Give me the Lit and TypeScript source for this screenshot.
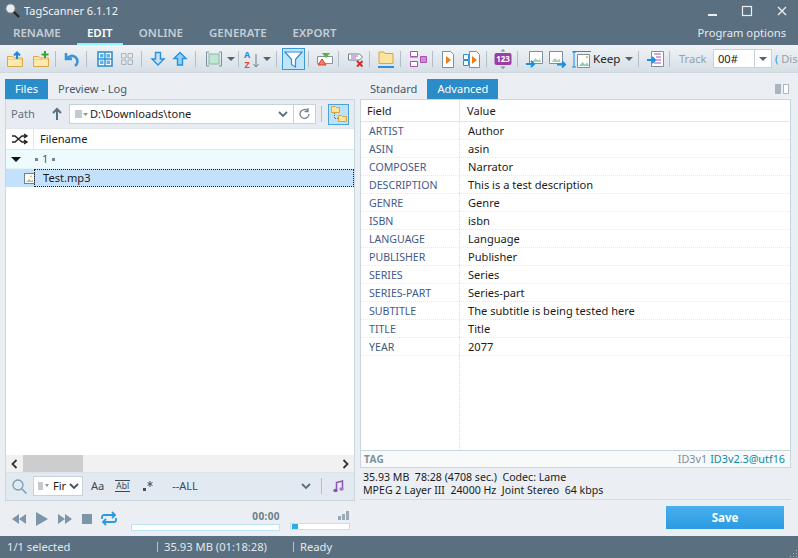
import { LitElement, css, html, svg } from "lit";
import { customElement } from "lit/decorators.js";

const ic = (w: number, h: number, body: unknown, cls = "") =>
  html`<svg class="ic ${cls}" width=${w} height=${h} viewBox="0 0 ${w} ${h}">${body}</svg>`;

const folder = (extra: unknown) => svg`
  <path d="M2.500 7.500h5l1.500 1.500h8.500v8.500h-15z" fill="#fde9ad" stroke="#dca94a"/>
  <path d="M3 10.500h14" stroke="#f4cf78"/>${extra}`;

const sep = html`<span class="sep"></span>`;
const caret = (cls = "") => html`<span class="caret ${cls}"></span>`;
const picture = svg`<path d="M6 15l3.500-4 2.500 2.500 2-2 2.500 3.500z" fill="#8fd0b0"/><circle cx="14" cy="6" r="1.200" fill="#f0c060"/>`;

const tags: [string, string][] = [
  ["ARTIST", "Author"],
  ["ASIN", "asin"],
  ["COMPOSER", "Narrator"],
  ["DESCRIPTION", "This is a test description"],
  ["GENRE", "Genre"],
  ["ISBN", "isbn"],
  ["LANGUAGE", "Language"],
  ["PUBLISHER", "Publisher"],
  ["SERIES", "Series"],
  ["SERIES-PART", "Series-part"],
  ["SUBTITLE", "The subtitle is being tested here"],
  ["TITLE", "Title"],
  ["YEAR", "2077"],
];

@customElement("app-root")
export class AppRoot extends LitElement {
  static styles = css`
    :host {
      display: flex;
      flex-direction: column;
      width: 798px;
      height: 558px;
      overflow: hidden;
      background: #ebeff4;
      color: #1b1b1b;
      font-family: "Noto Sans", "Open Sans", sans-serif;
      font-size: 11.1px;
      line-height: 16px;
    }
    .ic { display: block; flex: none; overflow: visible; }

    .head { background: #5a6f80; color: #fff; height: 45px; flex: none; }
    .title { display: flex; align-items: center; height: 22px; padding-left: 4px; gap: 4px; font-size: 11px; color: #f2f5f7; }
    .winbtns { margin-left: auto; display: flex; gap: 25px; padding-right: 11px; align-items: center; }
    .menu { display: flex; height: 23px; padding-left: 13px; font-weight: 600; font-size: 11.5px; color: #c3ced6; }
    .menu span { margin-right: 26px; line-height: 21px; }
    .menu .on { color: #fff; margin: 0 16px 0 -10px; width: 46px; text-align: center; border-bottom: 2px solid #8ff0ff; height: 21px; }
    .menu .opts { margin: 0 12px 0 auto; font-weight: 400; font-size: 11.200px; color: #e4eaee; }

    .toolbar { display: flex; align-items: center; height: 28px; flex: none; padding-left: 5px;
      background: linear-gradient(#f0f3f6, #d6dfe6); overflow: hidden; border-bottom: 1px solid #cfd8de; box-sizing: border-box; }
    .toolbar > .ic { margin-left: 6px; }
    .toolbar > .ic:first-child { margin-left: 0; }
    .toolbar > .ic.g2 { margin-left: 2px; }
    .toolbar > .ic.g3 { margin-left: 3px; }
    .toolbar > .ic.g4 { margin-left: 4px; }
    .toolbar > .ic.g5 { margin-left: 5px; }
    .toolbar > .ic.g7 { margin-left: 7px; }
    .toolbar > .ic.g8 { margin-left: 8px; }
    .sep { width: 1px; height: 16px; background: #b4c0c9; flex: none; margin-left: 4px; }
    .sep.g3 { margin-left: 3px; }
    .sep.g5 { margin-left: 5px; }
    .caret { width: 0; height: 0; border: 4px solid transparent; border-top: 4px solid #55646f; border-bottom: 0; flex: none; margin-left: 2px; }
    .caret.g3 { margin-left: 3px; }
    .caret.g5 { margin-left: 5px; }
    .filter { background: #c2e4f8; border: 1px solid #3b9ad6; width: 23px; height: 22px; display: flex; align-items: center; justify-content: center; flex: none; box-sizing: border-box; margin-left: 5px; }
    .keep { color: #222; margin-left: 2px; width: 27px; flex: none; font-size: 11.600px; }
    .track { color: #93a2ad; margin-left: 9px; width: 27px; flex: none; }
    .trackbox { display: flex; align-items: center; width: 59px; height: 19px; background: #fff; border: 1px solid #c6d2da; flex: none; padding-left: 4px; box-sizing: border-box; margin-left: 7px; }
    .trackbox i { margin-left: auto; width: 16px; height: 100%; border-left: 1px solid #c6d2da; display: flex; align-items: center; justify-content: center; }
    .trackbox .caret { margin: 0; }
    .disc { color: #93a2ad; white-space: nowrap; margin-left: 3px; }
    .disc b { color: #2a9ae0; font-weight: 400; }

    .body { display: grid; grid-template-columns: 350px 431px; gap: 0 5px; padding: 6px 7px 0 5px; height: 428px; box-sizing: border-box; flex: none; }
    .col { display: flex; flex-direction: column; min-width: 0; }
    .tabs { display: flex; height: 20px; flex: none; align-items: center; }
    .tabs span { padding: 0 10px; line-height: 20px; color: #46586a; }
    .tabs .on { background: #2a8cc8; color: #fff; }
    .tabs .layout { margin-left: auto; margin-right: 2px; padding: 0; }

    .panel { border: 1px solid #c8d6de; height: 402px; box-sizing: border-box; display: flex; flex-direction: column; background: #fff; flex: none; }
    .path { display: flex; align-items: center; height: 28px; background: #e6ecf2; flex: none; padding-left: 5px; box-sizing: border-box; }
    .path .lbl { color: #5f7080; width: 40px; }
    .combo { display: flex; align-items: center; background: #fff; border: 1px solid #c6d2da; height: 20px; box-sizing: border-box; width: 247px; margin-left: 6px; padding-left: 4px; }
    .combo .txt { margin-left: 2px; }
    .combo .cv { margin-left: auto; margin-right: 5px; }
    .combo .rf { width: 21px; height: 100%; border-left: 1px solid #c6d2da; display: flex; align-items: center; justify-content: center; }
    .pick { width: 21px; height: 21px; background: #bfe2f7; border: 1px solid #49a3da; box-sizing: border-box; margin-left: 6px; display: flex; align-items: center; justify-content: center; }
    .path .sep { margin-left: 5px; }

    .lhead { display: flex; align-items: center; height: 22px; flex: none; border-top: 1px solid #dfe6ec; border-bottom: 1px solid #dfe6ec; box-sizing: border-box; }
    .lhead .sh { width: 27px; height: 100%; border-right: 1px solid #dfe6ec; display: flex; align-items: center; justify-content: center; }
    .lhead .fn { margin-left: 6px; }
    .group { display: flex; align-items: center; height: 19px; background: #edfbfe; flex: none; color: #555; box-sizing: border-box; border-bottom: 1px solid #e6f2f6; }
    .tri { width: 0; height: 0; border: 5px solid transparent; border-top: 5px solid #111; border-bottom: 0; margin: 0 10px 0 5px; }
    .dot { width: 3px; height: 3px; background: #6f8294; margin: 0 4px; }
    .file { display: flex; align-items: center; height: 18px; background: #c4e1fb; flex: none; }
    .file .thumb { margin-left: 18px; margin-right: -1px; }
    .file .name { flex: 1; height: 100%; border: 1px dotted #222; box-sizing: border-box; padding-left: 8px; line-height: 15px; }
    .grow { flex: 1; }
    .hscroll { display: flex; align-items: center; height: 17px; flex: none; background: #f1f1f1; }
    .hscroll .thumb { width: 60px; height: 17px; background: #cdcdcd; }
    .arrow { width: 17px; display: flex; justify-content: center; flex: none; }
    .hscroll .arrow:last-child { margin-left: auto; }
    .find { display: flex; align-items: center; height: 28px; background: #e2e9f0; flex: none; padding: 0 0 1px 6px; box-sizing: border-box; border-top: 1px solid #dbe3ea; }
    .findbox { display: flex; align-items: center; gap: 3px; background: #fff; border: 1px solid #c6d2da; height: 20px; width: 50px; box-sizing: border-box; margin-left: 6px; padding-left: 4px; overflow: hidden; white-space: nowrap; }
    .aa { margin-left: 8px; color: #3c4a56; }
    .abl { margin-left: 11px; font-size: 8.500px; color: #3c4a56; border-top: 1px solid #3c4a56; border-bottom: 1px solid #3c4a56; line-height: 10px; padding: 0 1px; }
    .star { margin-left: 12px; }
    .all { margin-left: 18px; color: #2e4b72; font-size: 11px; }
    .find .cv { margin-left: auto; }
    .find .sep { margin: 0 11px 0 10px; }
    .find .note { margin-right: 9px; }

    .table { height: 369px; border: 1px solid #c8d6de; box-sizing: border-box; display: flex; flex-direction: column; background: #fff; flex: none; }
    .thead { display: grid; grid-template-columns: 98px 1fr; height: 22px; flex: none; border-bottom: 1px solid #dfe6ec; align-items: center; box-sizing: border-box; }
    .thead span { padding-left: 6px; line-height: 21px; }
    .thead span:last-child { border-left: 1px solid #dfe6ec; padding-left: 7px; }
    .rows { flex: 1; display: flex; flex-direction: column; }
    .row { display: grid; grid-template-columns: 98px 1fr; height: 18px; box-sizing: border-box; border-bottom: 1px dotted #e4e9ed; line-height: 17px; }
    .row .k { color: #3f5a8a; padding: 1px 0 0 8px; font-size: 10.600px; line-height: 16px; }
    .row .v { padding-left: 8px; border-left: 1px dotted #d5dde3; }
    .rest { flex: 1; margin-left: 98px; border-left: 1px dotted #d5dde3; }
    .tagbar { display: flex; align-items: center; height: 17px; flex: none; background: #f7f9fb; border-top: 1px solid #c8d6de; box-sizing: border-box; padding: 0 5px 0 3px; font-size: 10.800px; }
    .tagbar b { color: #7d909e; font-size: 10px; letter-spacing: 0.4px; }
    .tagbar .v1 { margin-left: auto; color: #7d909e; }
    .tagbar .v2 { margin-left: 3px; color: #118a9c; }
    .info { padding: 3px 0 0 3px; height: 32px; box-sizing: border-box; line-height: 13px; font-size: 10.600px; white-space: pre; flex: none; border-bottom: 1px solid #d5dde3; }

    .bottom { display: flex; flex: none; height: 35px; padding-left: 11px; box-sizing: border-box; align-items: center; }
    .controls { display: flex; align-items: center; gap: 9px; width: 120px; flex: none; }
    .meter { width: 149px; margin-top: 3px; flex: none; }
    .time { text-align: right; font-weight: 700; color: #6d7c88; font-size: 10px; line-height: 13px; letter-spacing: 0.4px; }
    .bar { height: 7px; box-sizing: border-box; border: 1px solid #bde4f6; background: #fff; margin-top: 1px; }
    .vol { width: 60px; margin: 3px 0 0 10px; flex: none; }
    .bars { display: flex; justify-content: flex-end; margin-bottom: 3px; }
    .fill { width: 6px; height: 100%; background: #27ace9; margin-left: 1px; }
    .save { margin: 0 14px 2px auto; width: 118px; height: 23px; background: linear-gradient(#49afef, #2b9ae0); color: #fff; font-weight: 700; display: flex; align-items: center; justify-content: center; font-size: 11.500px; border: 0; font-family: inherit; padding: 0; }

    .status { display: flex; align-items: center; height: 22px; background: #5a6f80; color: #e3e9ee; flex: none; padding-left: 7px; position: relative; font-size: 11.200px; }
    .status .sel { width: 150px; }
    .status .s { border-left: 1px solid #b6c2cb; height: 10px; padding-left: 6px; display: flex; align-items: center; }
    .status .sz { width: 129px; }
    .grip { position: absolute; right: 0; bottom: 0; }
  `;

  render() {
    return html`
      <div class="head">
        <div class="title">
          ${ic(16, 16, svg`<circle cx="6.500" cy="5.500" r="4.500" fill="#e9edf0" stroke="#8c979f"/><path d="M10 9l5 5" stroke="#23282c" stroke-width="2.400"/>`)}
          <span>TagScanner 6.1.12</span>
          <div class="winbtns">
            ${ic(10, 10, svg`<path d="M1 9h9" stroke="#e9eef1" stroke-width="2"/>`)}
            ${ic(10, 10, svg`<rect x=".5" y=".5" width="9" height="9" fill="none" stroke="#e9eef1" stroke-width="1.200"/>`)}
            ${ic(10, 10, svg`<path d="M1 1l8 8M9 1l-8 8" stroke="#e9eef1" stroke-width="1.400"/>`)}
          </div>
        </div>
        <div class="menu">
          <span>RENAME</span><span class="on">EDIT</span><span>ONLINE</span><span>GENERATE</span><span>EXPORT</span>
          <span class="opts">Program options</span>
        </div>
      </div>

      <div class="toolbar">
        ${ic(20, 20, folder(svg`<path d="M12 10V3.500M9 6.500l3-3 3 3" fill="none" stroke="#1e88d8" stroke-width="2"/>`))}
        ${ic(20, 20, folder(svg`<path d="M14 2v7M10.500 5.500h7" stroke="#33a532" stroke-width="2"/>`))}
        ${sep}
        ${ic(20, 20, svg`<path d="M4 4v6h6M5 10a5.500 5.500 0 1 1 8 7" fill="none" stroke="#3c94d9" stroke-width="2.600"/>`)}
        ${sep}
        ${ic(20, 20, svg`<rect x="3" y="3" width="14" height="14" fill="#fff" stroke="#2e90d4" stroke-width="1.600"/><path d="M10 3v14M3 10h14" stroke="#2e90d4" stroke-width="1.400"/><path d="M5 5h3.500v3.500H5zM11.500 5H15v3.500h-3.500zM5 11.500h3.500V15H5zM11.500 11.500H15V15h-3.500z" fill="#5cb4ea"/>`, "g8")}
        ${ic(20, 20, svg`<path d="M4.500 4.500h4.500V9H4.500zM11 4.500h4.500V9H11zM4.500 11H9v4.500H4.500zM11 11h4.500v4.500H11z" fill="none" stroke="#a8b4bd"/>`, "g2")}
        ${sep}
        ${ic(20, 20, svg`<path d="M7.500 3.500h5V10h3.500l-6 6-6-6h3.500z" fill="#bfe2fa" stroke="#2a8fdc" stroke-width="1.400"/>`)}
        ${ic(20, 20, svg`<path d="M7.500 16v-6.500H4l6-6 6 6h-3.500V16z" fill="#8fd0f7" stroke="#2a8fdc" stroke-width="1.400"/>`, "g2")}
        ${html`<span class="sep g5"></span>`}
        ${ic(20, 20, svg`<path d="M5 3H2.500v14H5M15 3h2.500v14H15" fill="none" stroke="#7d8f9c"/><rect x="5" y="5" width="10" height="10" fill="#bfe8d4" stroke="#8fb3a3"/>`, "g8")}
        ${caret("g3")}
        ${html`<span class="sep g3"></span>`}
        ${ic(20, 20, svg`<text x="6" y="9" font-size="9" font-weight="700" fill="#2a8fdc" text-anchor="middle" font-family="Noto Sans">A</text><text x="6" y="18.500" font-size="9" font-weight="700" fill="#e8473c" text-anchor="middle" font-family="Noto Sans">Z</text><path d="M15 5v13M12.500 15l2.500 3 2.500-3" fill="none" stroke="#6f7f8b"/>`, "g2")}
        ${caret()}
        ${html`<span class="sep g5"></span>`}
        <span class="filter">${ic(19, 18, svg`<path d="M1 2h17l-6.500 7.500V17l-4-2.500V9.500z" fill="#fff" stroke="#2a8fdc" stroke-width="1.200"/>`)}</span>
        ${html`<span class="sep g3"></span>`}
        ${ic(20, 20, svg`<path d="M2.500 7.500h15v7h-15z" fill="#fff" stroke="#87949e"/><path d="M7 4h8l-4 5z" fill="#4cbb3c"/><path d="M7 10l4 6H3z" fill="#f37c6c" stroke="#d9432f"/>`)}
        ${html`<span class="sep g3"></span>`}
        ${ic(20, 20, svg`<path d="M3.500 5h11l3 3-3 3h-11z" fill="#fff" stroke="#6f7f8b"/><path d="M6 7h7M6 9h5" stroke="#a55db8"/><path d="M12 12l5.500 5.500M17.500 12L12 17.500" stroke="#e5252a" stroke-width="2"/>`)}
        ${sep}
        ${ic(20, 20, svg`<path d="M3 3h5l1 1.500h8v10H3z" fill="#fbe3a0" stroke="#d9a441"/><path d="M2 18h16" stroke="#2a8fdc" stroke-width="2"/>`)}
        ${sep}
        ${ic(20, 20, svg`<path d="M2.500 2.500h7v5h-7z" fill="#fff" stroke="#a94fb5"/><path d="M2.500 12.500h7v5h-7z" fill="#fff" stroke="#a94fb5"/><path d="M2.500 8.500h7" stroke="#a94fb5" stroke-dasharray="1 1"/><path d="M12.500 7.500h6v6h-6z" fill="#c98bd3" stroke="#a94fb5"/>`, "g7")}
        ${sep}
        ${ic(20, 20, svg`<path d="M4.500 2.500h8l3 3v13h-11z" fill="#fff" stroke="#7d8f9c"/><path d="M8 7v8l5-4z" fill="#f07b16"/>`, "g5")}
        ${ic(20, 20, svg`<path d="M8.500 2.500h7l3 3v13h-10z" fill="#fff" stroke="#7d8f9c"/><path d="M2.500 5.500h5v5h-5zM2.500 11.500h5v5h-5z" fill="#fff" stroke="#2a8fdc"/><path d="M11 7v8l5-4z" fill="#f07b16"/>`, "g3")}
        ${html`<span class="sep g5"></span>`}
        ${ic(20, 20, svg`<path d="M10 0l2.500 2.500h-5zM10 20l2.500-2.500h-5z" fill="#7d8f9c"/><rect x="1.500" y="4" width="17" height="12" rx="2" fill="#9b3ea6"/><text x="10" y="13" font-size="8" font-weight="700" fill="#fff" text-anchor="middle" font-family="Noto Sans">123</text>`)}
        ${sep}
        ${ic(20, 20, svg`<path d="M5.500 2.500h13v12h-13z" fill="#fff" stroke="#7d8f9c"/><path d="M8 13l3.500-4 2.500 2.500 2-2 1 3.500z" fill="#9fd3b4"/><path d="M2 15h8M7 12l3 3-3 3" fill="none" stroke="#1a8fe0" stroke-width="2"/>`)}
        ${ic(20, 20, svg`<path d="M2.500 2.500h13v12h-13z" fill="#fff" stroke="#7d8f9c"/><path d="M4.500 13l3.500-4 2.500 2.500 2-2 1 3.500z" fill="#9fd3b4"/><path d="M10 15.500h8M15 12.500l3 3-3 3" fill="none" stroke="#1a8fe0" stroke-width="2"/>`, "g3")}
        ${ic(20, 20, svg`<path d="M2 2.500h18M3 3v15M1 3h4M1 18h4" fill="none" stroke="#1a8fe0"/><path d="M6.500 5.500h12v13h-12z" fill="#fff" stroke="#7d8f9c"/><g transform="translate(2 2)">${picture}</g>`, "g4")}
        <span class="keep">Keep</span>
        ${caret("g5")}
        ${html`<span class="sep g5"></span>`}
        ${ic(20, 20, svg`<path d="M6.500 2.500h12v15h-12z" fill="#fff" stroke="#7d8f9c"/><path d="M9 5h7M11 8h5M11 11h5M9 14h7" stroke="#a94fb5"/><path d="M2 11h8M7 8l3 3-3 3" fill="none" stroke="#1a8fe0" stroke-width="2"/>`)}
        ${sep}
        <span class="track">Track</span>
        <span class="trackbox">00#<i>${caret()}</i></span>
        <span class="disc"><b>(</b> Disc</span>
      </div>

      <div class="body">
        <div class="col">
          <div class="tabs"><span class="on">Files</span><span>Preview - Log</span></div>
          <div class="panel">
            <div class="path">
              <span class="lbl">Path</span>
              ${ic(12, 14, svg`<path d="M6 13V2M2 6l4-4 4 4" fill="none" stroke="#5a6f80" stroke-width="2"/>`)}
              <div class="combo">
                ${ic(14, 10, svg`<path d="M1 2h7M1 4h7M1 6h7M1 8h7" stroke="#8696a3"/><path d="M9 4h5l-2.500 3z" fill="#8696a3"/>`)}
                <span class="txt">D:\\Downloads\\tone</span>
                ${ic(10, 8, svg`<path d="M1 2l4 4 4-4" fill="none" stroke="#5a6f80" stroke-width="1.800"/>`, "cv")}
                <span class="rf">${ic(12, 12, svg`<path d="M10 6a4.500 4.500 0 1 1-1.500-3.400M9 0v3.500H5.500" fill="none" stroke="#75848f" stroke-width="1.300"/>`)}</span>
              </div>
              ${sep}
              <span class="pick">${ic(18, 18, svg`<path d="M1.500 1.500h4l1 1h3v5h-8z" fill="#fbe3a0" stroke="#d9a441"/><path d="M8.500 10.500h3l1 1h4v5h-8z" fill="#fbe3a0" stroke="#d9a441"/><path d="M4.500 8v5.500H8" fill="none" stroke="#5a6f80" stroke-dasharray="1 1"/>`)}</span>
            </div>
            <div class="lhead">
              <span class="sh">${ic(16, 12, svg`<path d="M0 3h3l7 6h4M0 9h3l7-6h4M12 1l3 2-3 2M12 7l3 2-3 2" fill="none" stroke="#222" stroke-width="1.400"/>`)}</span>
              <span class="fn">Filename</span>
            </div>
            <div class="group"><span class="tri"></span><span class="dot"></span>1<span class="dot"></span></div>
            <div class="file">
              <span class="thumb">${ic(11, 11, svg`<rect x=".5" y=".5" width="10" height="10" fill="#fff" stroke="#6f7f8b"/><path d="M2 9l3-3 2 2 2-1v2z" fill="#8fc9a8"/><circle cx="7" cy="3.500" r="1" fill="#f0c060"/>`)}</span>
              <span class="name">Test.mp3</span>
            </div>
            <div class="grow"></div>
            <div class="hscroll">
              <span class="arrow">${ic(7, 10, svg`<path d="M5.500 1l-4 4 4 4" fill="none" stroke="#333" stroke-width="1.800"/>`)}</span>
              <span class="thumb"></span>
              <span class="arrow">${ic(7, 10, svg`<path d="M1.500 1l4 4-4 4" fill="none" stroke="#333" stroke-width="1.800"/>`)}</span>
            </div>
            <div class="find">
              ${ic(15, 15, svg`<circle cx="6" cy="6" r="5" fill="none" stroke="#7b9eb3" stroke-width="1.300"/><path d="M9.500 9.500l5 5" stroke="#7b9eb3" stroke-width="1.500"/>`)}
              <div class="findbox">
                ${ic(12, 8, svg`<path d="M0 1h5M0 3h5M0 5h5M0 7h5" stroke="#8696a3"/><path d="M7 2h4l-2 3z" fill="#8696a3"/>`)}
                <span>Fir</span>
                ${ic(10, 8, svg`<path d="M1 2l4 4 4-4" fill="none" stroke="#44525e" stroke-width="1.800"/>`)}
              </div>
              <span class="aa">Aa</span>
              <span class="abl">Abl</span>
              <span class="star">${ic(12, 12, svg`<rect x="1" y="8" width="3" height="3" fill="#44525e"/><path d="M8 1v6M5.500 2.500l5 3M10.500 2.500l-5 3" stroke="#44525e"/>`)}</span>
              <span class="all">--ALL</span>
              <span class="cv">${ic(10, 8, svg`<path d="M1 2l4 4 4-4" fill="none" stroke="#5a6f80" stroke-width="1.800"/>`)}</span>
              ${sep}
              <span class="note">${ic(12, 13, svg`<path d="M3.500 10V2.500l6-1.500v7.500" fill="none" stroke="#8e54b4" stroke-width="1.500"/><ellipse cx="2.500" cy="10.500" rx="2.200" ry="1.800" fill="#8e54b4"/><ellipse cx="8.500" cy="9" rx="2.200" ry="1.800" fill="#a774c4"/>`)}</span>
            </div>
          </div>
        </div>

        <div class="col">
          <div class="tabs">
            <span>Standard</span><span class="on">Advanced</span>
            <span class="layout">${ic(14, 12, svg`<path d="M0 1h6v10H0z" fill="#a9b6c0"/><path d="M8.500 1.500h5v9h-5z" fill="#fff" stroke="#a9b6c0"/>`)}</span>
          </div>
          <div class="table">
            <div class="thead"><span>Field</span><span>Value</span></div>
            <div class="rows">
              ${tags.map(([k, v]) => html`<div class="row"><span class="k">${k}</span><span class="v">${v}</span></div>`)}
              <div class="rest"></div>
            </div>
            <div class="tagbar"><b>TAG</b><span class="v1">ID3v1</span><span class="v2">ID3v2.3@utf16</span></div>
          </div>
          <div class="info">35.93 MB  78:28 (4708 sec.)  Codec: Lame
MPEG 2 Layer III  24000 Hz  Joint Stereo  64 kbps</div>
        </div>
      </div>

      <div class="bottom">
        <div class="controls">
          ${ic(16, 12, svg`<path d="M8 1v10L1 6zM15 1v10L8 6z" fill="#7d95a8"/>`)}
          ${ic(12, 14, svg`<path d="M0 0v14l12-7z" fill="#7d95a8"/>`)}
          ${ic(16, 12, svg`<path d="M1 1v10l7-5zM8 1v10l7-5z" fill="#7d95a8"/>`)}
          ${ic(10, 10, svg`<rect width="10" height="10" fill="#7d95a8"/>`)}
          ${ic(16, 13, svg`<path d="M1 7V5a2 2 0 0 1 2-2h10M15 6v2a2 2 0 0 1-2 2H3M11 0l3 3-3 3M5 7l-3 3 3 3" fill="none" stroke="#2a9ae0" stroke-width="1.800"/>`)}
        </div>
        <div class="meter"><div class="time">00:00</div><div class="bar"></div></div>
        <div class="vol">
          <div class="bars">${ic(12, 9, svg`<path d="M0 5h3v4H0zM4 3h3v6H4zM8 0h3v9H8z" fill="#9aaab6"/>`)}</div>
          <div class="bar"><div class="fill"></div></div>
        </div>
        <button class="save">Save</button>
      </div>

      <div class="status">
        <span class="sel">1/1 selected</span>
        <span class="s sz">35.93 MB (01:18:28)</span>
        <span class="s">Ready</span>
        <span class="grip">${ic(10, 10, svg`<path d="M8 2h1v1H8zM5 5h1v1H5zM8 5h1v1H8zM2 8h1v1H2zM5 8h1v1H5zM8 8h1v1H8z" fill="#a9b6c0"/>`)}</span>
      </div>
    `;
  }
}
